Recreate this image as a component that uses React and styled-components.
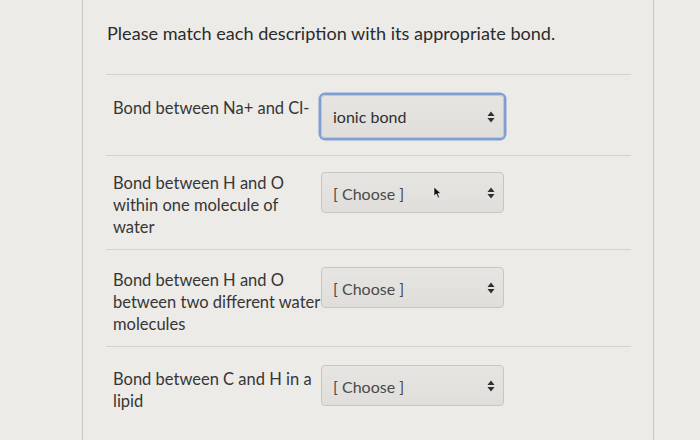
import React from 'react'
import styled, { createGlobalStyle } from 'styled-components'

const GlobalStyle = createGlobalStyle`
  html, body {
    margin: 0;
    padding: 0;
    background: #ecebe8;
  }
  body {
    font-family: Lato, "Open Sans", sans-serif;
    color: #333;
  }
`

const Page = styled.div`
  height: 440px;
  overflow: hidden;
  padding-left: 82px;
`

const Panel = styled.div`
  width: 572px;
  height: 100%;
  box-sizing: border-box;
  border-left: 1px solid #c9c8c5;
  border-right: 1px solid #c9c8c5;
  padding: 0 22px 0 23px;
`

const Title = styled.h1`
  margin: 0;
  padding: 19px 0 26px 1px;
  font-size: 18.1px;
  line-height: 29px;
  font-weight: 400;
  color: #2b2b2b;
`

const Row = styled.div`
  display: flex;
  align-items: flex-start;
  border-top: 1px solid #d3d2cf;
  padding: ${p => p.$top || 17}px 0 ${p => p.$bottom || 12}px 7px;
`

const Label = styled.div`
  width: 209px;
  flex: none;
  padding-top: ${p => p.$offset || 0}px;
  font-size: 16.5px;
  line-height: 22px;
  color: #363636;
`

const Select = styled.div`
  position: relative;
  width: 183px;
  height: 41px;
  box-sizing: border-box;
  display: flex;
  align-items: center;
  justify-content: space-between;
  padding: 0 8px 0 11px;
  margin-left: -1px;
  background: linear-gradient(#e6e5e2, #dfdedb);
  border: 1px solid #c7c6c3;
  border-radius: 4px;
  font-size: 16px;
  color: ${p => p.$focus ? '#2f2f2f' : '#4a4a4a'};
  box-shadow: ${p => p.$focus ? '0 0 0 2.5px #7f9fd3' : 'none'};
  margin-top: ${p => p.$focus ? 1 : 0}px;
  ${p => p.$focus && 'height: 43px;'}
`

const Value = styled.span`
  padding-top: ${p => p.$focus ? 0 : 1}px;
`

const Arrows = () => (
  <svg width="8" height="12" viewBox="0 0 8 12">
    <path d="M4 0.5 L7.5 5 L0.5 5 Z" fill="#2f2f2f" />
    <path d="M4 11.5 L7.5 7 L0.5 7 Z" fill="#2f2f2f" />
  </svg>
)

const Pointer = styled.svg`
  position: absolute;
  left: 111px;
  top: 13px;
`

const rows = [
  { label: 'Bond between Na+ and Cl-', value: 'ionic bond', focus: true, top: 19, bottom: 17, offset: 3 },
  { label: 'Bond between H and O within one molecule of water', value: '[ Choose ]', pointer: true, top: 16, bottom: 11 },
  { label: 'Bond between H and O between two different water molecules', value: '[ Choose ]', top: 17, bottom: 11, offset: 2 },
  { label: 'Bond between C and H in a lipid', value: '[ Choose ]', top: 18, bottom: 12, offset: 3 },
]

const App = () => {
  return (
    <Page>
      <GlobalStyle />
      <Panel>
        <Title>Please match each description with its appropriate bond.</Title>
        {rows.map((r, i) => (
          <Row key={i} $top={r.top} $bottom={r.bottom}>
            <Label $offset={r.offset}>{r.label}</Label>
            <Select $focus={r.focus}>
              <Value $focus={r.focus}>{r.value}</Value>
              <Arrows />
              {r.pointer && (
                <Pointer width="9" height="13" viewBox="0 0 9 13">
                  <path d="M1 1 L1 10 L3.3 8 L5 12 L6.5 11.3 L4.9 7.6 L8 7.5 Z" fill="#111" stroke="#fff" strokeWidth="0.6" />
                </Pointer>
              )}
            </Select>
          </Row>
        ))}
      </Panel>
    </Page>
  )
}

export default App
